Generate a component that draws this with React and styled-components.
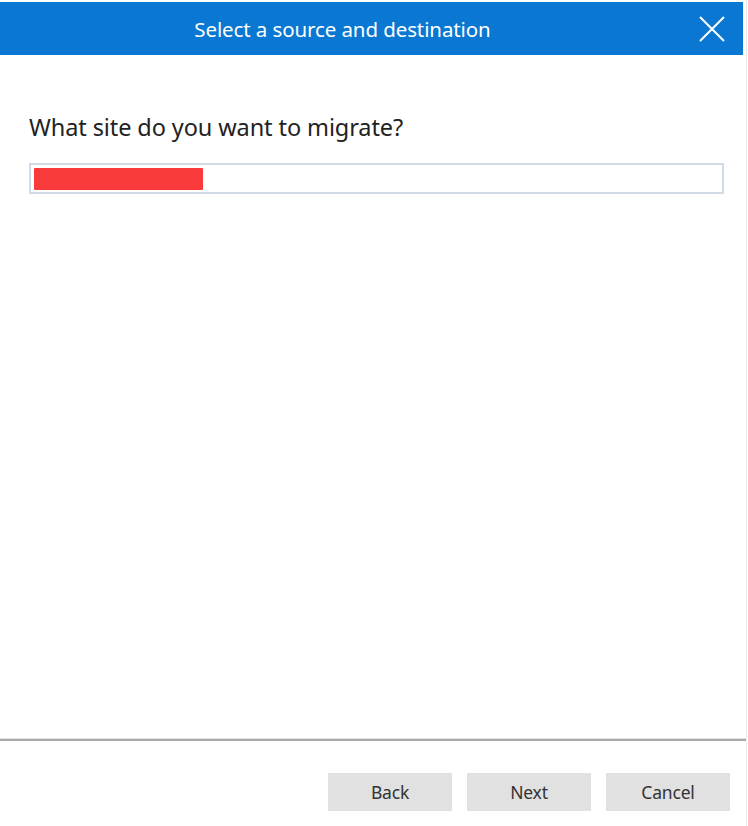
import React from 'react'
import styled, { createGlobalStyle } from 'styled-components'

const Global = createGlobalStyle`
  html, body { margin: 0; padding: 0; background: #fff; }
  body { font-family: "Noto Sans", "Open Sans", sans-serif; }
`

const Dialog = styled.div`
  width: 746px;
  height: 826px;
  display: flex;
  flex-direction: column;
  border-right: 1px solid #ececec;
  background: #fff;
`

const TitleBar = styled.div`
  margin-top: 2px;
  width: 743px;
  height: 53px;
  background: #0a78d2;
  display: flex;
  align-items: center;
`

const Title = styled.div`
  flex: 1;
  text-align: center;
  color: #fff;
  font-size: 20.5px;
  letter-spacing: -0.1px;
  padding-top: 1px;
`

const CloseButton = styled.button`
  width: 53px;
  height: 53px;
  margin-right: 5px;
  border: 0;
  background: transparent;
  display: flex;
  align-items: center;
  justify-content: center;
  padding: 0;
  cursor: pointer;
`

const Body = styled.div`
  flex: 1;
  padding: 56px 22px 0 29px;
`

const Question = styled.div`
  font-size: 23.5px;
  color: #222;
  letter-spacing: -0.1px;
  line-height: 32px;
`

const Field = styled.div`
  margin-top: 20px;
  height: 27px;
  border: 2px solid #d0dbe6;
  background: #fff;
  display: flex;
  align-items: center;
  padding-left: 3px;
`

const Redaction = styled.div`
  width: 169px;
  height: 22px;
  background: #f93a3a;
  border-radius: 1px;
`

const Divider = styled.div`
  height: 2px;
  background: #a8a8a8;
  border-top: 1px solid #e4e4e4;
`

const Footer = styled.div`
  height: 85px;
  display: flex;
  justify-content: flex-end;
  align-items: flex-start;
  gap: 15px;
  padding: 32px 16px 0 0;
  box-sizing: border-box;
`

const Button = styled.button`
  width: 124px;
  height: 38px;
  border: 0;
  background: #e1e1e1;
  color: #333;
  font-family: "Noto Sans", "Open Sans", sans-serif;
  font-size: 17.5px;
  letter-spacing: -0.2px;
  padding: 0;
`

export default function App() {
  return (
    <>
      <Global />
      <Dialog>
        <TitleBar>
          <Title>Select a source and destination</Title>
          <CloseButton aria-label="Close">
            <svg width="26" height="26" viewBox="0 0 26 26">
              <path d="M1 1 L25 25 M25 1 L1 25" stroke="#fff" strokeWidth="2" fill="none" />
            </svg>
          </CloseButton>
        </TitleBar>
        <Body>
          <Question>What site do you want to migrate?</Question>
          <Field>
            <Redaction />
          </Field>
        </Body>
        <Divider />
        <Footer>
          <Button>Back</Button>
          <Button>Next</Button>
          <Button>Cancel</Button>
        </Footer>
      </Dialog>
    </>
  )
}
